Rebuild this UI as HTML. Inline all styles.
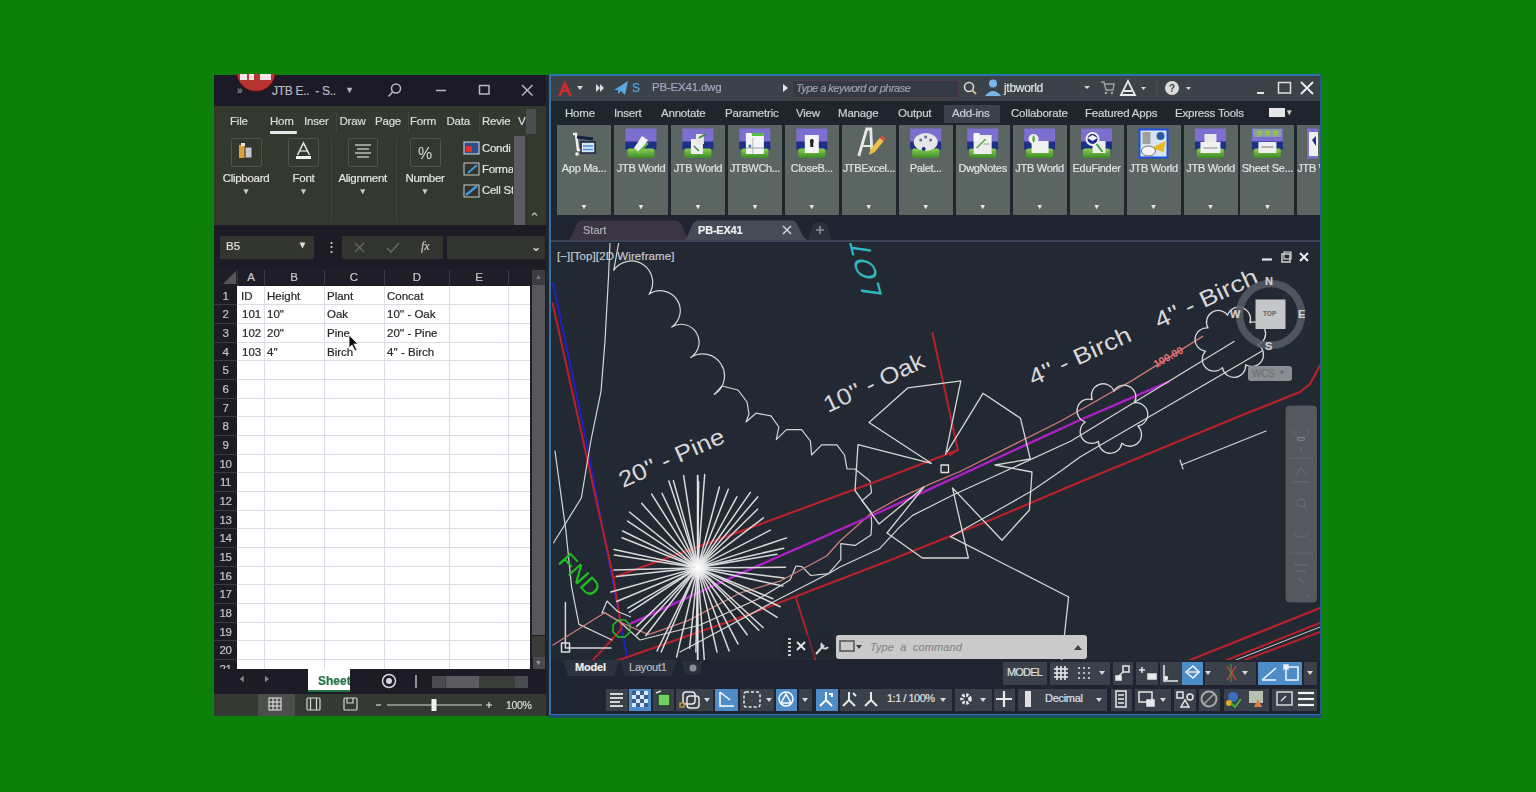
<!DOCTYPE html>
<html><head><meta charset="utf-8">
<style>
*{margin:0;padding:0;box-sizing:border-box}
html,body{width:1536px;height:792px;overflow:hidden;background:#0d7f0b;font-family:"Liberation Sans",sans-serif;position:relative}
.a{position:absolute}
.t{position:absolute;white-space:nowrap;line-height:1;-webkit-text-stroke:0.2px currentColor}
svg{position:absolute;left:0;top:0}
</style></head><body>
<div id="root" style="position:absolute;left:0;top:0;width:1536px;height:792px;filter:blur(0.45px)">
<div class="a" style="left:214px;top:75px;width:334px;height:641px;background:#1c1b26;"></div>
<div class="a" style="left:214px;top:75px;width:334px;height:31px;background:#1c1a27;"></div>
<div class="a" style="left:214px;top:74px;width:100px;height:31px;overflow:hidden"><div class="a" style="left:22px;top:-22px;width:40px;height:40px;border-radius:50%;background:#b8342e;border:1px solid #4a0c10"></div><div class="a" style="left:26px;top:0px;width:14px;height:6px;background:#f2e4e4"></div><div class="a" style="left:33px;top:0px;width:2px;height:6px;background:#c04040"></div><div class="a" style="left:46px;top:0px;width:11px;height:6px;background:#f2e4e4"></div></div>
<div class="t" style="left:237px;top:86px;font-size:10px;color:#9a9aa6;">&#187;</div>
<div class="t" style="left:272px;top:85px;font-size:12px;color:#b8b8c2;letter-spacing:-0.3px">JTB E..&nbsp; - S..</div>
<div class="t" style="left:347px;top:85px;font-size:10px;color:#b8b8c2;">&#9662;</div>
<svg width="1536" height="792" style="pointer-events:none"><g stroke="#b8b8c2" fill="none" stroke-width="1.5"><circle cx="396" cy="88.5" r="4.5"/><line x1="392.8" y1="91.7" x2="388.5" y2="96.5"/><line x1="436" y1="90.5" x2="446" y2="90.5"/><rect x="479.5" y="85.5" width="9.5" height="8.5"/><line x1="522" y1="85" x2="532.5" y2="95.5"/><line x1="532.5" y1="85" x2="522" y2="95.5"/></g></svg>
<div class="a" style="left:214px;top:106px;width:334px;height:119px;background:#33392f;"></div>
<div class="t" style="left:230px;top:116px;font-size:11.5px;color:#dcdcdc;letter-spacing:-0.2px">File</div>
<div class="t" style="left:270px;top:116px;font-size:11.5px;color:#dcdcdc;letter-spacing:-0.2px">Hom</div>
<div class="t" style="left:304px;top:116px;font-size:11.5px;color:#dcdcdc;letter-spacing:-0.2px">Inser</div>
<div class="t" style="left:339.5px;top:116px;font-size:11.5px;color:#dcdcdc;letter-spacing:-0.2px">Draw</div>
<div class="t" style="left:375px;top:116px;font-size:11.5px;color:#dcdcdc;letter-spacing:-0.2px">Page</div>
<div class="t" style="left:410px;top:116px;font-size:11.5px;color:#dcdcdc;letter-spacing:-0.2px">Form</div>
<div class="t" style="left:446.5px;top:116px;font-size:11.5px;color:#dcdcdc;letter-spacing:-0.2px">Data</div>
<div class="t" style="left:482px;top:116px;font-size:11.5px;color:#dcdcdc;letter-spacing:-0.2px">Revie</div>
<div class="t" style="left:518px;top:116px;font-size:11.5px;color:#dcdcdc;letter-spacing:-0.2px">V</div>
<div class="a" style="left:270px;top:131px;width:27px;height:2.5px;background:#e6e6e6;border-radius:1px"></div>
<div class="a" style="left:336px;top:111px;width:1px;height:22px;background:#40443e;"></div>
<div class="a" style="left:407.5px;top:111px;width:1px;height:22px;background:#40443e;"></div>
<div class="a" style="left:478.5px;top:111px;width:1px;height:22px;background:#40443e;"></div>
<div class="a" style="left:526px;top:109px;width:10px;height:25px;background:#4c4f50;"></div>
<div class="a" style="left:230.5px;top:138px;width:31px;height:29px;background:transparent;border:1.5px solid #4f524c;border-radius:2px"></div>
<div class="a" style="left:288px;top:138px;width:31px;height:29px;background:transparent;border:1.5px solid #4f524c;border-radius:2px"></div>
<div class="a" style="left:348px;top:138px;width:29.5px;height:29px;background:transparent;border:1.5px solid #4f524c;border-radius:2px"></div>
<div class="a" style="left:409.5px;top:138px;width:31px;height:29px;background:transparent;border:1.5px solid #4f524c;border-radius:2px"></div>
<div class="t" style="left:206px;top:173px;width:80px;text-align:center;font-size:11.5px;color:#e4e4e4;letter-spacing:-0.3px">Clipboard</div>
<div class="t" style="left:236px;top:188px;width:20px;text-align:center;font-size:8px;color:#cfcfcf">&#9660;</div>
<div class="t" style="left:263.5px;top:173px;width:80px;text-align:center;font-size:11.5px;color:#e4e4e4;letter-spacing:-0.3px">Font</div>
<div class="t" style="left:293.5px;top:188px;width:20px;text-align:center;font-size:8px;color:#cfcfcf">&#9660;</div>
<div class="t" style="left:322.7px;top:173px;width:80px;text-align:center;font-size:11.5px;color:#e4e4e4;letter-spacing:-0.3px">Alignment</div>
<div class="t" style="left:352.7px;top:188px;width:20px;text-align:center;font-size:8px;color:#cfcfcf">&#9660;</div>
<div class="t" style="left:385px;top:173px;width:80px;text-align:center;font-size:11.5px;color:#e4e4e4;letter-spacing:-0.3px">Number</div>
<div class="t" style="left:415px;top:188px;width:20px;text-align:center;font-size:8px;color:#cfcfcf">&#9660;</div>
<div class="a" style="left:330.5px;top:138px;width:1px;height:84px;background:#41453f;"></div>
<div class="a" style="left:396.4px;top:138px;width:1px;height:84px;background:#41453f;"></div>
<svg width="1536" height="792" style="pointer-events:none"><rect x="239" y="145" width="6" height="13" fill="#d9a23a"/><rect x="245" y="147" width="7" height="11" fill="#c7c9cc" stroke="#30332e" stroke-width="1"/><rect x="241" y="143" width="4" height="3" fill="#e8e8e8"/><path d="M297.5 155 L303.5 143 L309.5 155" stroke="#e8e8e8" stroke-width="1.5" fill="none"/><line x1="300" y1="151" x2="307" y2="151" stroke="#e8e8e8" stroke-width="1.2"/><rect x="296" y="156" width="15" height="3" fill="#f2f2f2"/><g stroke="#d0d0d0" stroke-width="1.3"><line x1="355" y1="145" x2="371" y2="145"/><line x1="357" y1="149" x2="369" y2="149"/><line x1="355" y1="153" x2="371" y2="153"/><line x1="357" y1="157" x2="369" y2="157"/></g><text x="425" y="159" font-size="16" fill="#d8d8d8" text-anchor="middle" font-family="Liberation Sans">%</text><rect x="464" y="142" width="15" height="12" fill="#2a4f8a" stroke="#ddd" stroke-width="1"/><rect x="466" y="146" width="6" height="6" fill="#e03030"/><rect x="464" y="163" width="15" height="12" fill="#30332e" stroke="#ccc" stroke-width="1"/><path d="M468 173 L477 165" stroke="#3a9ae0" stroke-width="2"/><rect x="464" y="185" width="15" height="12" fill="#30332e" stroke="#ccc" stroke-width="1"/><path d="M466 195 L477 186" stroke="#3a9ae0" stroke-width="2.5"/></svg>
<div class="t" style="left:482px;top:143px;width:31px;overflow:hidden;font-size:11.5px;color:#e4e4e4;letter-spacing:-0.3px">Condi</div>
<div class="t" style="left:482px;top:164px;width:31px;overflow:hidden;font-size:11.5px;color:#e4e4e4;letter-spacing:-0.3px">Forma</div>
<div class="t" style="left:482px;top:185px;width:31px;overflow:hidden;font-size:11.5px;color:#e4e4e4;letter-spacing:-0.3px">Cell St</div>
<div class="a" style="left:514px;top:136px;width:10.5px;height:89px;background:#5c5b63;"></div>
<div class="t" style="left:529px;top:211px;font-size:13px;color:#c8c8c8;">&#8963;</div>
<div class="a" style="left:214px;top:225px;width:334px;height:43px;background:#1d1c26;"></div>
<div class="a" style="left:219.5px;top:235.5px;width:94px;height:23px;background:#33362f;"></div>
<div class="t" style="left:226px;top:241px;font-size:11.5px;color:#e0e0e0;">B5</div>
<div class="t" style="left:298px;top:241px;font-size:9px;color:#e0e0e0;">&#9660;</div>
<div class="t" style="left:325px;top:240px;font-size:13px;color:#c8c8c8;">&#8942;</div>
<div class="a" style="left:342px;top:235.5px;width:101px;height:23.5px;background:#32352f;"></div>
<svg width="1536" height="792" style="pointer-events:none"><g stroke="#6a6c6a" stroke-width="1.3" fill="none"><line x1="355" y1="243" x2="364" y2="252"/><line x1="364" y1="243" x2="355" y2="252"/><path d="M387 248 L391 252 L399 243"/></g></svg>
<div class="t" style="left:421px;top:240px;font-size:12px;color:#c8c8c8;font-family:Liberation Serif"><i>fx</i></div>
<div class="a" style="left:447px;top:235.5px;width:98px;height:23.5px;background:#32352f;"></div>
<div class="t" style="left:531px;top:241px;font-size:12px;color:#e0e0e0;">&#8964;</div>
<div class="a" style="left:214px;top:268px;width:318px;height:18.5px;background:#1e1d28;"></div>
<svg width="1536" height="792" style="pointer-events:none"><path d="M223 284 L236 284 L236 271 Z" fill="#55585a"/></svg>
<div class="t" style="left:241px;top:272px;width:20px;text-align:center;font-size:11.5px;color:#c8c8cc">A</div>
<div class="t" style="left:284px;top:272px;width:20px;text-align:center;font-size:11.5px;color:#c8c8cc">B</div>
<div class="t" style="left:344px;top:272px;width:20px;text-align:center;font-size:11.5px;color:#c8c8cc">C</div>
<div class="t" style="left:407px;top:272px;width:20px;text-align:center;font-size:11.5px;color:#c8c8cc">D</div>
<div class="t" style="left:469px;top:272px;width:20px;text-align:center;font-size:11.5px;color:#c8c8cc">E</div>
<div class="a" style="left:236.5px;top:270px;width:1px;height:16px;background:#3b3b46;"></div>
<div class="a" style="left:263.9px;top:270px;width:1px;height:16px;background:#3b3b46;"></div>
<div class="a" style="left:323.7px;top:270px;width:1px;height:16px;background:#3b3b46;"></div>
<div class="a" style="left:383.8px;top:270px;width:1px;height:16px;background:#3b3b46;"></div>
<div class="a" style="left:449.0px;top:270px;width:1px;height:16px;background:#3b3b46;"></div>
<div class="a" style="left:508.1px;top:270px;width:1px;height:16px;background:#3b3b46;"></div>
<div class="a" style="left:237px;top:286px;width:293px;height:383px;background:#ffffff;"></div>
<div class="a" style="left:237px;top:304.2px;width:293px;height:1px;background:#d7dee6;"></div>
<div class="a" style="left:237px;top:322.9px;width:293px;height:1px;background:#d7dee6;"></div>
<div class="a" style="left:237px;top:341.5px;width:293px;height:1px;background:#d7dee6;"></div>
<div class="a" style="left:237px;top:360.2px;width:293px;height:1px;background:#d7dee6;"></div>
<div class="a" style="left:237px;top:378.9px;width:293px;height:1px;background:#d7dee6;"></div>
<div class="a" style="left:237px;top:397.6px;width:293px;height:1px;background:#d7dee6;"></div>
<div class="a" style="left:237px;top:416.3px;width:293px;height:1px;background:#d7dee6;"></div>
<div class="a" style="left:237px;top:434.9px;width:293px;height:1px;background:#d7dee6;"></div>
<div class="a" style="left:237px;top:453.6px;width:293px;height:1px;background:#d7dee6;"></div>
<div class="a" style="left:237px;top:472.3px;width:293px;height:1px;background:#d7dee6;"></div>
<div class="a" style="left:237px;top:491.0px;width:293px;height:1px;background:#d7dee6;"></div>
<div class="a" style="left:237px;top:509.7px;width:293px;height:1px;background:#d7dee6;"></div>
<div class="a" style="left:237px;top:528.3px;width:293px;height:1px;background:#d7dee6;"></div>
<div class="a" style="left:237px;top:547.0px;width:293px;height:1px;background:#d7dee6;"></div>
<div class="a" style="left:237px;top:565.7px;width:293px;height:1px;background:#d7dee6;"></div>
<div class="a" style="left:237px;top:584.4px;width:293px;height:1px;background:#d7dee6;"></div>
<div class="a" style="left:237px;top:603.1px;width:293px;height:1px;background:#d7dee6;"></div>
<div class="a" style="left:237px;top:621.7px;width:293px;height:1px;background:#d7dee6;"></div>
<div class="a" style="left:237px;top:640.4px;width:293px;height:1px;background:#d7dee6;"></div>
<div class="a" style="left:237px;top:659.1px;width:293px;height:1px;background:#d7dee6;"></div>
<div class="a" style="left:263.9px;top:286px;width:1px;height:383px;background:#d7dee6;"></div>
<div class="a" style="left:323.7px;top:286px;width:1px;height:383px;background:#d7dee6;"></div>
<div class="a" style="left:383.8px;top:286px;width:1px;height:383px;background:#d7dee6;"></div>
<div class="a" style="left:449.0px;top:286px;width:1px;height:383px;background:#d7dee6;"></div>
<div class="a" style="left:508.1px;top:286px;width:1px;height:383px;background:#d7dee6;"></div>
<div class="t" style="left:214px;top:290.5px;width:23px;text-align:center;font-size:11.5px;color:#c4c4cc;letter-spacing:-0.5px">1</div>
<div class="a" style="left:214px;top:304.2px;width:23px;height:1px;background:#3a3a46;"></div>
<div class="t" style="left:214px;top:309.2px;width:23px;text-align:center;font-size:11.5px;color:#c4c4cc;letter-spacing:-0.5px">2</div>
<div class="a" style="left:214px;top:322.9px;width:23px;height:1px;background:#3a3a46;"></div>
<div class="t" style="left:214px;top:327.9px;width:23px;text-align:center;font-size:11.5px;color:#c4c4cc;letter-spacing:-0.5px">3</div>
<div class="a" style="left:214px;top:341.5px;width:23px;height:1px;background:#3a3a46;"></div>
<div class="t" style="left:214px;top:346.5px;width:23px;text-align:center;font-size:11.5px;color:#c4c4cc;letter-spacing:-0.5px">4</div>
<div class="a" style="left:214px;top:360.2px;width:23px;height:1px;background:#3a3a46;"></div>
<div class="t" style="left:214px;top:365.2px;width:23px;text-align:center;font-size:11.5px;color:#c4c4cc;letter-spacing:-0.5px">5</div>
<div class="a" style="left:214px;top:378.9px;width:23px;height:1px;background:#3a3a46;"></div>
<div class="t" style="left:214px;top:383.9px;width:23px;text-align:center;font-size:11.5px;color:#c4c4cc;letter-spacing:-0.5px">6</div>
<div class="a" style="left:214px;top:397.6px;width:23px;height:1px;background:#3a3a46;"></div>
<div class="t" style="left:214px;top:402.6px;width:23px;text-align:center;font-size:11.5px;color:#c4c4cc;letter-spacing:-0.5px">7</div>
<div class="a" style="left:214px;top:416.3px;width:23px;height:1px;background:#3a3a46;"></div>
<div class="t" style="left:214px;top:421.3px;width:23px;text-align:center;font-size:11.5px;color:#c4c4cc;letter-spacing:-0.5px">8</div>
<div class="a" style="left:214px;top:434.9px;width:23px;height:1px;background:#3a3a46;"></div>
<div class="t" style="left:214px;top:439.9px;width:23px;text-align:center;font-size:11.5px;color:#c4c4cc;letter-spacing:-0.5px">9</div>
<div class="a" style="left:214px;top:453.6px;width:23px;height:1px;background:#3a3a46;"></div>
<div class="t" style="left:214px;top:458.6px;width:23px;text-align:center;font-size:11.5px;color:#c4c4cc;letter-spacing:-0.5px">10</div>
<div class="a" style="left:214px;top:472.3px;width:23px;height:1px;background:#3a3a46;"></div>
<div class="t" style="left:214px;top:477.3px;width:23px;text-align:center;font-size:11.5px;color:#c4c4cc;letter-spacing:-0.5px">11</div>
<div class="a" style="left:214px;top:491.0px;width:23px;height:1px;background:#3a3a46;"></div>
<div class="t" style="left:214px;top:496.0px;width:23px;text-align:center;font-size:11.5px;color:#c4c4cc;letter-spacing:-0.5px">12</div>
<div class="a" style="left:214px;top:509.7px;width:23px;height:1px;background:#3a3a46;"></div>
<div class="t" style="left:214px;top:514.7px;width:23px;text-align:center;font-size:11.5px;color:#c4c4cc;letter-spacing:-0.5px">13</div>
<div class="a" style="left:214px;top:528.3px;width:23px;height:1px;background:#3a3a46;"></div>
<div class="t" style="left:214px;top:533.3px;width:23px;text-align:center;font-size:11.5px;color:#c4c4cc;letter-spacing:-0.5px">14</div>
<div class="a" style="left:214px;top:547.0px;width:23px;height:1px;background:#3a3a46;"></div>
<div class="t" style="left:214px;top:552.0px;width:23px;text-align:center;font-size:11.5px;color:#c4c4cc;letter-spacing:-0.5px">15</div>
<div class="a" style="left:214px;top:565.7px;width:23px;height:1px;background:#3a3a46;"></div>
<div class="t" style="left:214px;top:570.7px;width:23px;text-align:center;font-size:11.5px;color:#c4c4cc;letter-spacing:-0.5px">16</div>
<div class="a" style="left:214px;top:584.4px;width:23px;height:1px;background:#3a3a46;"></div>
<div class="t" style="left:214px;top:589.4px;width:23px;text-align:center;font-size:11.5px;color:#c4c4cc;letter-spacing:-0.5px">17</div>
<div class="a" style="left:214px;top:603.1px;width:23px;height:1px;background:#3a3a46;"></div>
<div class="t" style="left:214px;top:608.1px;width:23px;text-align:center;font-size:11.5px;color:#c4c4cc;letter-spacing:-0.5px">18</div>
<div class="a" style="left:214px;top:621.7px;width:23px;height:1px;background:#3a3a46;"></div>
<div class="t" style="left:214px;top:626.7px;width:23px;text-align:center;font-size:11.5px;color:#c4c4cc;letter-spacing:-0.5px">19</div>
<div class="a" style="left:214px;top:640.4px;width:23px;height:1px;background:#3a3a46;"></div>
<div class="t" style="left:214px;top:645.4px;width:23px;text-align:center;font-size:11.5px;color:#c4c4cc;letter-spacing:-0.5px">20</div>
<div class="a" style="left:214px;top:659.1px;width:23px;height:1px;background:#3a3a46;"></div>
<div class="t" style="left:214px;top:664.1px;width:23px;text-align:center;font-size:11.5px;color:#c4c4cc;letter-spacing:-0.5px">21</div>
<div class="a" style="left:214px;top:677.8px;width:23px;height:1px;background:#3a3a46;"></div>
<div class="t" style="left:241px;top:290.5px;font-size:11.5px;color:#262626">ID</div>
<div class="t" style="left:267px;top:290.5px;font-size:11.5px;color:#262626">Height</div>
<div class="t" style="left:327px;top:290.5px;font-size:11.5px;color:#262626">Plant</div>
<div class="t" style="left:387px;top:290.5px;font-size:11.5px;color:#262626">Concat</div>
<div class="t" style="left:242px;top:309.2px;font-size:11.5px;color:#262626">101</div>
<div class="t" style="left:267px;top:309.2px;font-size:11.5px;color:#262626">10"</div>
<div class="t" style="left:327px;top:309.2px;font-size:11.5px;color:#262626">Oak</div>
<div class="t" style="left:387px;top:309.2px;font-size:11.5px;color:#262626">10'' - Oak</div>
<div class="t" style="left:242px;top:327.9px;font-size:11.5px;color:#262626">102</div>
<div class="t" style="left:267px;top:327.9px;font-size:11.5px;color:#262626">20"</div>
<div class="t" style="left:327px;top:327.9px;font-size:11.5px;color:#262626">Pine</div>
<div class="t" style="left:387px;top:327.9px;font-size:11.5px;color:#262626">20'' - Pine</div>
<div class="t" style="left:242px;top:346.5px;font-size:11.5px;color:#262626">103</div>
<div class="t" style="left:267px;top:346.5px;font-size:11.5px;color:#262626">4''</div>
<div class="t" style="left:327px;top:346.5px;font-size:11.5px;color:#262626">Birch</div>
<div class="t" style="left:387px;top:346.5px;font-size:11.5px;color:#262626">4'' - Birch</div>
<svg width="1536" height="792" style="pointer-events:none"><path d="M349 335 L349 348 L352 345 L355 351 L357 350 L354 344 L358 344 Z" fill="#111" stroke="#fff" stroke-width="0.8"/></svg>
<div class="a" style="left:530px;top:268px;width:18px;height:401px;background:#1e1d28;"></div>
<div class="a" style="left:532px;top:270px;width:13px;height:15px;background:#3c3c44;"></div>
<div class="t" style="left:535px;top:273px;font-size:7px;color:#777;">&#9650;</div>
<div class="a" style="left:531.5px;top:285px;width:13px;height:350px;background:#58585c;"></div>
<div class="a" style="left:531.5px;top:636px;width:13px;height:22px;background:#3a3d37;"></div>
<div class="a" style="left:532.5px;top:657px;width:12.5px;height:11.5px;background:#4a4a50;"></div>
<div class="t" style="left:535px;top:659px;font-size:7px;color:#999;">&#9660;</div>
<div class="a" style="left:214px;top:669px;width:334px;height:24px;background:#1c1b26;"></div>
<div class="t" style="left:239px;top:675px;font-size:8px;color:#8a8a90;transform:scaleX(0.6)">&#9664;</div>
<div class="t" style="left:264px;top:675px;font-size:8px;color:#8a8a90;transform:scaleX(0.6)">&#9654;</div>
<div class="a" style="left:308px;top:669px;width:42px;height:23px;background:#ffffff;"></div>
<div class="t" style="left:318px;top:675px;width:32px;overflow:hidden;font-size:12px;font-weight:bold;color:#217346">Sheet</div>
<div class="a" style="left:308px;top:690px;width:42px;height:2px;background:#217346;"></div>
<svg width="1536" height="792" style="pointer-events:none"><circle cx="389" cy="681" r="6.5" stroke="#d8d8d8" stroke-width="1.5" fill="none"/><circle cx="389" cy="681" r="3" fill="#d8d8d8"/><line x1="416" y1="675" x2="416" y2="688" stroke="#bbb" stroke-width="1.5"/></svg>
<div class="a" style="left:432px;top:675.5px;width:96px;height:12px;background:#3b3e38;"></div>
<div class="a" style="left:432px;top:675.5px;width:13px;height:12px;background:#4a4a52;"></div>
<div class="a" style="left:515px;top:675.5px;width:13px;height:12px;background:#4a4a52;"></div>
<div class="a" style="left:446px;top:675.5px;width:33px;height:12px;background:#5b5b60;"></div>
<div class="a" style="left:214px;top:693.5px;width:334px;height:22.5px;background:#343931;"></div>
<div class="a" style="left:258px;top:693.5px;width:37px;height:22px;background:#4b4e4a;"></div>
<svg width="1536" height="792" style="pointer-events:none"><g stroke="#d8d8d8" stroke-width="1.2" fill="none"><rect x="269" y="698" width="12" height="12"/><line x1="269" y1="702" x2="281" y2="702"/><line x1="269" y1="706" x2="281" y2="706"/><line x1="273" y1="698" x2="273" y2="710"/><line x1="277" y1="698" x2="277" y2="710"/><rect x="307" y="698" width="13" height="12" rx="1"/><line x1="310.5" y1="698" x2="310.5" y2="710"/><line x1="316.5" y1="698" x2="316.5" y2="710"/><rect x="344" y="698" width="13" height="12" rx="1"/><path d="M347 698 L347 703 L353 703 L353 698"/><line x1="376" y1="705" x2="381" y2="705"/><line x1="387" y1="705" x2="482" y2="705"/><line x1="486" y1="705" x2="492" y2="705"/><line x1="489" y1="702" x2="489" y2="708"/></g><rect x="431.5" y="699" width="5" height="12" fill="#f0f0f0"/></svg>
<div class="t" style="left:506px;top:700px;font-size:10.5px;color:#dcdcdc;letter-spacing:-0.3px">100%</div>
<div class="a" style="left:546px;top:75px;width:3px;height:641px;background:#25252d;"></div>
<div class="a" style="left:549px;top:74px;width:773px;height:643.5px;background:#2f73ad;"></div>
<div class="a" style="left:551px;top:76px;width:769px;height:637.5px;background:#1f2430;"></div>
<div class="a" style="left:551px;top:76px;width:769px;height:24.5px;background:#3c4249;"></div>
<svg width="1536" height="792" style="pointer-events:none"><path d="M558 96 L565 80 L572 96 L569 96 L565 87 L561 96 Z" fill="#d02a2a"/><rect x="561" y="90" width="8" height="2" fill="#d02a2a"/><path d="M577 86 L583 86 L580 90 Z" fill="#d8d8d8"/><path d="M596 84 L600 88 L596 92 Z M600 84 L604 88 L600 92 Z" fill="#e0e0e0"/><path d="M614 90 L628 81 L625 95 L621 91 L618 94 L618 90 Z" fill="#5aa8e0"/><path d="M783 84 L788 88 L783 92 Z" fill="#e8e8e8"/><circle cx="969" cy="87" r="4.5" stroke="#d8d8d8" stroke-width="1.6" fill="none"/><line x1="972" y1="90" x2="976" y2="94" stroke="#c8b890" stroke-width="2"/><circle cx="993" cy="83.5" r="4" fill="#78b8e8"/><path d="M985 96 Q993 86 1001 96 Z" fill="#78b8e8"/><path d="M1084 86 L1090 86 L1087 89 Z" fill="#d8d8d8"/><path d="M1101 82 L1104 82 L1106 90 L1113 90 L1114 84 L1105 84" stroke="#9a9ea4" stroke-width="1.5" fill="none"/><circle cx="1106" cy="93" r="1.3" fill="#9a9ea4"/><circle cx="1112" cy="93" r="1.3" fill="#9a9ea4"/><path d="M1121 95 L1128 81 L1135 95 Z M1124 91 L1132 91" stroke="#e8e8e8" stroke-width="1.8" fill="none"/><path d="M1141 87 L1146 87 L1143.5 90 Z" fill="#d8d8d8"/><line x1="1157" y1="80" x2="1157" y2="97" stroke="#4a525c" stroke-width="1"/><circle cx="1172" cy="88" r="7" fill="#dcdcdc"/><text x="1172" y="92" font-size="10" font-weight="bold" text-anchor="middle" fill="#3b424d" font-family="Liberation Sans">?</text><path d="M1186 87 L1191 87 L1188.5 90 Z" fill="#d8d8d8"/><line x1="1257" y1="93" x2="1264" y2="93" stroke="#e8e8e8" stroke-width="2"/><rect x="1278.5" y="82.5" width="12" height="10.5" stroke="#e0e0e0" stroke-width="1.5" fill="none"/><path d="M1301 82 L1313 94 M1313 82 L1301 94" stroke="#f0f0f0" stroke-width="1.8"/></svg>
<div class="t" style="left:632px;top:82px;font-size:12px;color:#5aa8e0;">S</div>
<div class="t" style="left:652px;top:82px;font-size:11.5px;color:#a0a8c0;letter-spacing:-0.2px">PB-EX41.dwg</div>
<div class="a" style="left:792px;top:79.5px;width:167px;height:18px;background:#333a44;border:1px solid #4b3f48"></div>
<div class="t" style="left:796px;top:83px;font-size:11px;color:#9aa0a8;letter-spacing:-0.5px"><i>Type a keyword or phrase</i></div>
<div class="t" style="left:1004px;top:82px;font-size:12px;color:#dde0e4;letter-spacing:-0.3px">jtbworld</div>
<div class="a" style="left:551px;top:100.5px;width:769px;height:22.5px;background:#1f252d;"></div>
<div class="a" style="left:944px;top:104.5px;width:56px;height:18.5px;background:#3b424d;"></div>
<div class="t" style="left:565px;top:108px;font-size:11.5px;color:#cdd1d6;letter-spacing:-0.2px">Home</div>
<div class="t" style="left:614px;top:108px;font-size:11.5px;color:#cdd1d6;letter-spacing:-0.2px">Insert</div>
<div class="t" style="left:661px;top:108px;font-size:11.5px;color:#cdd1d6;letter-spacing:-0.2px">Annotate</div>
<div class="t" style="left:725px;top:108px;font-size:11.5px;color:#cdd1d6;letter-spacing:-0.2px">Parametric</div>
<div class="t" style="left:796px;top:108px;font-size:11.5px;color:#cdd1d6;letter-spacing:-0.2px">View</div>
<div class="t" style="left:838px;top:108px;font-size:11.5px;color:#cdd1d6;letter-spacing:-0.2px">Manage</div>
<div class="t" style="left:898px;top:108px;font-size:11.5px;color:#cdd1d6;letter-spacing:-0.2px">Output</div>
<div class="t" style="left:952px;top:108px;font-size:11.5px;color:#cdd1d6;letter-spacing:-0.2px">Add-ins</div>
<div class="t" style="left:1011px;top:108px;font-size:11.5px;color:#cdd1d6;letter-spacing:-0.2px">Collaborate</div>
<div class="t" style="left:1085px;top:108px;font-size:11.5px;color:#cdd1d6;letter-spacing:-0.2px">Featured Apps</div>
<div class="t" style="left:1175px;top:108px;font-size:11.5px;color:#cdd1d6;letter-spacing:-0.2px">Express Tools</div>
<div class="a" style="left:1269px;top:108px;width:16px;height:9px;background:#e6e6e6;"></div>
<div class="t" style="left:1287px;top:108px;font-size:9px;color:#d0d0d0;">&#9662;</div>
<div class="a" style="left:551px;top:123px;width:769px;height:92px;background:#1f252d;"></div>
<div class="a" style="left:557.0px;top:124.5px;width:54px;height:90px;background:#5b6663;"></div>
<div class="t" style="left:555.0px;top:163px;width:58px;text-align:center;font-size:11px;color:#e0e4e8;letter-spacing:-0.3px;overflow:hidden">App Ma...</div>
<div class="t" style="left:579.0px;top:203px;width:10px;text-align:center;font-size:7px;color:#e8eaf0">&#9660;</div>
<div class="a" style="left:614.0px;top:124.5px;width:54px;height:90px;background:#5b6663;"></div>
<div class="t" style="left:612.0px;top:163px;width:58px;text-align:center;font-size:11px;color:#e0e4e8;letter-spacing:-0.3px;overflow:hidden">JTB World</div>
<div class="t" style="left:636.0px;top:203px;width:10px;text-align:center;font-size:7px;color:#e8eaf0">&#9660;</div>
<div class="a" style="left:670.9px;top:124.5px;width:54px;height:90px;background:#5b6663;"></div>
<div class="t" style="left:668.9px;top:163px;width:58px;text-align:center;font-size:11px;color:#e0e4e8;letter-spacing:-0.3px;overflow:hidden">JTB World</div>
<div class="t" style="left:692.9px;top:203px;width:10px;text-align:center;font-size:7px;color:#e8eaf0">&#9660;</div>
<div class="a" style="left:727.9px;top:124.5px;width:54px;height:90px;background:#5b6663;"></div>
<div class="t" style="left:725.9px;top:163px;width:58px;text-align:center;font-size:11px;color:#e0e4e8;letter-spacing:-0.3px;overflow:hidden">JTBWCh...</div>
<div class="t" style="left:749.9px;top:203px;width:10px;text-align:center;font-size:7px;color:#e8eaf0">&#9660;</div>
<div class="a" style="left:784.8px;top:124.5px;width:54px;height:90px;background:#5b6663;"></div>
<div class="t" style="left:782.8px;top:163px;width:58px;text-align:center;font-size:11px;color:#e0e4e8;letter-spacing:-0.3px;overflow:hidden">CloseB...</div>
<div class="t" style="left:806.8px;top:203px;width:10px;text-align:center;font-size:7px;color:#e8eaf0">&#9660;</div>
<div class="a" style="left:841.8px;top:124.5px;width:54px;height:90px;background:#5b6663;"></div>
<div class="t" style="left:839.8px;top:163px;width:58px;text-align:center;font-size:11px;color:#e0e4e8;letter-spacing:-0.3px;overflow:hidden">JTBExcel...</div>
<div class="t" style="left:863.8px;top:203px;width:10px;text-align:center;font-size:7px;color:#e8eaf0">&#9660;</div>
<div class="a" style="left:898.7px;top:124.5px;width:54px;height:90px;background:#5b6663;"></div>
<div class="t" style="left:896.7px;top:163px;width:58px;text-align:center;font-size:11px;color:#e0e4e8;letter-spacing:-0.3px;overflow:hidden">Palet...</div>
<div class="t" style="left:920.7px;top:203px;width:10px;text-align:center;font-size:7px;color:#e8eaf0">&#9660;</div>
<div class="a" style="left:955.7px;top:124.5px;width:54px;height:90px;background:#5b6663;"></div>
<div class="t" style="left:953.7px;top:163px;width:58px;text-align:center;font-size:11px;color:#e0e4e8;letter-spacing:-0.3px;overflow:hidden">DwgNotes</div>
<div class="t" style="left:977.7px;top:203px;width:10px;text-align:center;font-size:7px;color:#e8eaf0">&#9660;</div>
<div class="a" style="left:1012.6px;top:124.5px;width:54px;height:90px;background:#5b6663;"></div>
<div class="t" style="left:1010.6px;top:163px;width:58px;text-align:center;font-size:11px;color:#e0e4e8;letter-spacing:-0.3px;overflow:hidden">JTB World</div>
<div class="t" style="left:1034.6px;top:203px;width:10px;text-align:center;font-size:7px;color:#e8eaf0">&#9660;</div>
<div class="a" style="left:1069.6px;top:124.5px;width:54px;height:90px;background:#5b6663;"></div>
<div class="t" style="left:1067.6px;top:163px;width:58px;text-align:center;font-size:11px;color:#e0e4e8;letter-spacing:-0.3px;overflow:hidden">EduFinder</div>
<div class="t" style="left:1091.6px;top:203px;width:10px;text-align:center;font-size:7px;color:#e8eaf0">&#9660;</div>
<div class="a" style="left:1126.5px;top:124.5px;width:54px;height:90px;background:#5b6663;"></div>
<div class="t" style="left:1124.5px;top:163px;width:58px;text-align:center;font-size:11px;color:#e0e4e8;letter-spacing:-0.3px;overflow:hidden">JTB World</div>
<div class="t" style="left:1148.5px;top:203px;width:10px;text-align:center;font-size:7px;color:#e8eaf0">&#9660;</div>
<div class="a" style="left:1183.5px;top:124.5px;width:54px;height:90px;background:#5b6663;"></div>
<div class="t" style="left:1181.5px;top:163px;width:58px;text-align:center;font-size:11px;color:#e0e4e8;letter-spacing:-0.3px;overflow:hidden">JTB World</div>
<div class="t" style="left:1205.5px;top:203px;width:10px;text-align:center;font-size:7px;color:#e8eaf0">&#9660;</div>
<div class="a" style="left:1240.4px;top:124.5px;width:54px;height:90px;background:#5b6663;"></div>
<div class="t" style="left:1238.4px;top:163px;width:58px;text-align:center;font-size:11px;color:#e0e4e8;letter-spacing:-0.3px;overflow:hidden">Sheet Se...</div>
<div class="t" style="left:1262.4px;top:203px;width:10px;text-align:center;font-size:7px;color:#e8eaf0">&#9660;</div>
<div class="a" style="left:1297.3px;top:124.5px;width:22.7px;height:90px;background:#5b6663;"></div>
<div class="t" style="left:1297.3px;top:163px;width:22.7px;font-size:11px;color:#e0e4e8;letter-spacing:-0.3px;overflow:hidden">JTB W</div>
<div class="a" style="left:551px;top:215px;width:769px;height:26px;background:#1f2430;"></div>
<svg width="1536" height="792" style="pointer-events:none"><path d="M568 240 C574 238 574 221 582 220.5 L676 220.5 C684 221 684 238 692 240 Z" fill="#3a3540"/><path d="M684 240 C690 238 690 221 698 220.5 L792 220.5 C800 221 800 238 808 240 Z" fill="#464c55"/><path d="M807 240 C811 238 811 223 816 222.5 L824 222.5 C829 223 829 238 833 240 Z" fill="#2c323c"/><path d="M783 226 L791 234 M791 226 L783 234" stroke="#d8d8d8" stroke-width="1.4"/><path d="M816 230 L824 230 M820 226 L820 234" stroke="#8a9099" stroke-width="1.5"/></svg>
<div class="t" style="left:583px;top:225px;font-size:11px;color:#aab0b8;">Start</div>
<div class="t" style="left:698px;top:225px;font-size:11px;color:#f0f0f0;font-weight:bold;letter-spacing:-0.2px">PB-EX41</div>
<div class="a" style="left:551px;top:239.5px;width:769px;height:2.5px;background:#3a4656;"></div>
<div class="a" style="left:551px;top:242.5px;width:769px;height:418px;background:#222932;"></div>
<div class="t" style="left:557px;top:251px;font-size:11.5px;color:#c8cbd0;letter-spacing:0.1px">[&#8722;][Top][2D Wireframe]</div>
<svg width="1536" height="792" style="pointer-events:none"><defs><linearGradient id="gg" x1="0" y1="0" x2="0" y2="1"><stop offset="0" stop-color="#8ad050"/><stop offset="1" stop-color="#3c8a28"/></linearGradient></defs><path d="M573.0 134 L576.0 134 L578.0 150 L592.0 150" stroke="#f0f0f0" stroke-width="2.5" fill="none"/><path d="M577.0 137 L593.0 139" stroke="#1a2040" stroke-width="3"/><rect x="581.0" y="142" width="14" height="11" fill="#d8e6f4" stroke="#1a2040" stroke-width="1.5"/><line x1="583.0" y1="146" x2="593.0" y2="146" stroke="#4a90d8" stroke-width="1.5"/><line x1="583.0" y1="149.5" x2="593.0" y2="149.5" stroke="#4a90d8" stroke-width="1.5"/><circle cx="577.0" cy="154" r="1.8" fill="#f0f0f0"/><rect x="625.45" y="128.5" width="31" height="14" fill="#7c6fcf"/><rect x="625.45" y="141.5" width="31" height="8" fill="#1e2f86"/><rect x="627.45" y="148.5" width="27" height="9.5" fill="url(#gg)" rx="2"/><path d="M633.95 148 L641.95 136 L647.95 140 L639.95 153 Z" fill="#f0f0f0"/><path d="M638.95 152 L647.95 143" stroke="#60c040" stroke-width="2"/><rect x="682.4" y="128.5" width="31" height="14" fill="#7c6fcf"/><rect x="682.4" y="141.5" width="31" height="8" fill="#1e2f86"/><rect x="684.4" y="148.5" width="27" height="9.5" fill="url(#gg)" rx="2"/><rect x="690.9" y="139" width="12" height="15" fill="#f0f0f0"/><rect x="695.9" y="134" width="8" height="10" fill="#e8e8e8"/><path d="M693.9 146 L698.9 151" stroke="#3a8a40" stroke-width="1.5"/><path d="M698.9 138 L705.9 134" stroke="#3a9040" stroke-width="2"/><rect x="739.35" y="128.5" width="31" height="14" fill="#7c6fcf"/><rect x="739.35" y="141.5" width="31" height="8" fill="#1e2f86"/><rect x="741.35" y="148.5" width="27" height="9.5" fill="url(#gg)" rx="2"/><rect x="745.85" y="133" width="18" height="21" fill="#f4f4f4"/><rect x="751.85" y="133" width="12" height="3" fill="#50c040"/><line x1="745.85" y1="148" x2="763.85" y2="148" stroke="#888" stroke-width="0.8"/><line x1="752.85" y1="138" x2="752.85" y2="154" stroke="#aaa" stroke-width="0.8"/><circle cx="749.85" cy="146" r="1.5" fill="#4a70c0"/><rect x="796.3" y="128.5" width="31" height="14" fill="#7c6fcf"/><rect x="796.3" y="141.5" width="31" height="8" fill="#1e2f86"/><rect x="798.3" y="148.5" width="27" height="9.5" fill="url(#gg)" rx="2"/><rect x="804.8" y="135" width="14" height="18" fill="#f4f4f4"/><rect x="810.3" y="141" width="3" height="6" fill="#222"/><circle cx="811.8" cy="141" r="2" fill="#222"/><path d="M858.75 156 L866.75 129 L870.75 129 L871.75 150" stroke="#e8e8e8" stroke-width="2.8" fill="none"/><path d="M862.75 146 L871.75 146" stroke="#e8e8e8" stroke-width="2"/><path d="M868.75 155 L870.75 149 L879.75 138 L883.75 141 L874.75 152 Z" fill="#f0c048"/><path d="M879.75 138 L881.75 135.5 L885.75 138.5 L883.75 141 Z" fill="#e04848"/><rect x="910.2" y="128.5" width="31" height="14" fill="#7c6fcf"/><rect x="910.2" y="141.5" width="31" height="8" fill="#1e2f86"/><rect x="912.2" y="148.5" width="27" height="9.5" fill="url(#gg)" rx="2"/><ellipse cx="925.7" cy="142" rx="12" ry="9" fill="#e6e6e6"/><circle cx="920.7" cy="140" r="1.5" fill="#6a6a9a"/><circle cx="925.7" cy="137" r="1.5" fill="#6a6a9a"/><circle cx="930.7" cy="140" r="1.5" fill="#6a6a9a"/><circle cx="923.7" cy="149" r="2" fill="#1e2f86"/><rect x="967.1500000000001" y="128.5" width="31" height="14" fill="#7c6fcf"/><rect x="967.1500000000001" y="141.5" width="31" height="8" fill="#1e2f86"/><rect x="969.1500000000001" y="148.5" width="27" height="9.5" fill="url(#gg)" rx="2"/><rect x="973.6500000000001" y="135" width="18" height="19" fill="#eeeeee"/><rect x="973.6500000000001" y="133" width="6" height="8" fill="#f8f8f8"/><path d="M976.6500000000001 148 L985.6500000000001 139" stroke="#50b040" stroke-width="1.5"/><line x1="983.6500000000001" y1="144" x2="989.6500000000001" y2="144" stroke="#999"/><rect x="1024.1" y="128.5" width="31" height="14" fill="#7c6fcf"/><rect x="1024.1" y="141.5" width="31" height="8" fill="#1e2f86"/><rect x="1026.1" y="148.5" width="27" height="9.5" fill="url(#gg)" rx="2"/><rect x="1031.6" y="141" width="17" height="12" fill="#f0f0f0"/><circle cx="1033.6" cy="139" r="5" fill="#f0f0f0"/><path d="M1033.6 135 Q1036.6 139 1033.6 143 Q1030.6 139 1033.6 135" fill="#60b040"/><rect x="1081.0500000000002" y="128.5" width="31" height="14" fill="#7c6fcf"/><rect x="1081.0500000000002" y="141.5" width="31" height="8" fill="#1e2f86"/><rect x="1083.0500000000002" y="148.5" width="27" height="9.5" fill="url(#gg)" rx="2"/><rect x="1092.5500000000002" y="141" width="13" height="12" fill="#eeeeee"/><circle cx="1092.5500000000002" cy="139" r="6" fill="#1e2f86" stroke="#f0f0f0" stroke-width="2"/><path d="M1087.5500000000002 138 L1092.5500000000002 135 L1097.5500000000002 138 L1092.5500000000002 141 Z" fill="#f0f0f0"/><line x1="1096.5500000000002" y1="144" x2="1102.5500000000002" y2="152" stroke="#40a040" stroke-width="2"/><rect x="1138.5" y="128.5" width="30" height="30" fill="#1a50e0"/><rect x="1140.5" y="130.5" width="26" height="26" fill="#d8e4f0"/><rect x="1142.5" y="132" width="8" height="12" fill="#a0a0a0"/><path d="M1151.5 148 L1165.5 141 L1163.5 152 Z" fill="#e8b820"/><ellipse cx="1148.5" cy="151" rx="7" ry="5" fill="#f4f4f4" stroke="#555" stroke-width="0.8"/><circle cx="1160.5" cy="136" r="4" fill="#2a5aa0"/><rect x="1194.95" y="128.5" width="31" height="14" fill="#7c6fcf"/><rect x="1194.95" y="141.5" width="31" height="8" fill="#1e2f86"/><rect x="1196.95" y="148.5" width="27" height="9.5" fill="url(#gg)" rx="2"/><rect x="1200.45" y="142" width="20" height="11" fill="#f0f0f0"/><rect x="1204.45" y="134" width="12" height="8" fill="#e8e8e8"/><line x1="1203.45" y1="148" x2="1217.45" y2="148" stroke="#888"/><rect x="1251.9" y="128.5" width="31" height="14" fill="#7c6fcf"/><rect x="1251.9" y="141.5" width="31" height="8" fill="#1e2f86"/><rect x="1253.9" y="148.5" width="27" height="9.5" fill="url(#gg)" rx="2"/><rect x="1253.4" y="129" width="28" height="8" fill="#8aa0a8"/><circle cx="1259.4" cy="133" r="2.5" fill="#a0c040"/><circle cx="1267.4" cy="133" r="2.5" fill="#a0c040"/><circle cx="1275.4" cy="133" r="2.5" fill="#a0c040"/><rect x="1258.4" y="142" width="18" height="11" fill="#eeeeee"/><line x1="1261.4" y1="147" x2="1273.4" y2="147" stroke="#777"/><rect x="1307" y="128.5" width="11" height="30" fill="#7c6fcf"/><rect x="1309" y="132" width="9" height="24" fill="#f0f0f0"/><path d="M1312 140 L1316 136 L1316 146 Z" fill="#1e2f86"/></svg>
<div class="a" style="left:1320px;top:74px;width:2px;height:643.5px;background:#225d8c;"></div>
<svg width="1536" height="792" style="pointer-events:none"><defs><clipPath id="dc"><rect x="551" y="243" width="769" height="417"/></clipPath></defs><g clip-path="url(#dc)" fill="none" stroke-linejoin="round" stroke-linecap="round"><polyline points="553,283 586,440 627,657" stroke="#2020c0" stroke-width="2" /><polyline points="552.5,303 583,440 613.3,577.5 621.6,629 593,660" stroke="#b8202a" stroke-width="2" /><polyline points="610,243 608.6,275 605,341 601,391.5 591,440 581.3,498 553.6,542.8" stroke="#d6d6d6" stroke-width="1.2" /><polyline points="555,451 566,531.7 571.6,587 579,624.4 612,640" stroke="#d6d6d6" stroke-width="1.2" /><path d="M618.7,243 L613.7,270.3 A21.3,21.3 0 0 1 649,294.3 A19.9,19.9 0 0 1 671.7,327 A17.9,17.9 0 0 1 690.7,357.4 A21.9,21.9 0 0 1 714.4,394.3 " stroke="#d6d6d6" stroke-width="1.2"/><polyline points="714.4,394.3 722,386 738,390 747,402 749,414 746,422 756,413.2 771,415.8 778.8,427 776.3,439.7 786.4,429.6 801.5,429.6 810.4,441 811.6,455 821.7,444.8 836.9,444.8 844.5,455 847,468.8 855,469 870,481 871.6,492.5 862,500.8 871,512 871.7,524 871,535 855,545.4 840.8,543.7 840.8,559.6 828.4,573.7 810.7,575.5 802,566.6 796,566 790,580 760,598 700,625 640,640 620,622 604.7,612.8 602,613 607,601 617.6,611.5 630.5,616.7" stroke="#d6d6d6" stroke-width="1.2" /><polyline points="565.4,602.5 565.4,648 611,648" stroke="#d6d6d6" stroke-width="1.5" /><rect x="561.5" y="643" width="8" height="9" stroke="#e0e0e0" stroke-width="1.5"/><polygon points="618,620 625,620 630,625 630,632 625,637 618,637 613,632 613,625" stroke="#20c020" stroke-width="1.5"/><polyline points="553,645 604.7,612.8 620,622 648.5,634.7 688,620.6 740,593 780.7,580.8 826.6,556 840,541 870.3,514 900.6,497.3 931,483.6 960,471.5 1060,421.5 1132,380.6 1202.6,336.4" stroke="#d07a7a" stroke-width="1.3" /><polyline points="595,668 628.5,656.7 748,614.7 890.6,560 990.5,520 1080,481.9 1240,416 1300,392 1310,384 1322,362" stroke="#b8202a" stroke-width="2.2" /><polyline points="613.3,577.5 748,528.6 880,480 957.8,450" stroke="#b8202a" stroke-width="2.2" /><polyline points="932.5,333 957.8,450 950,455" stroke="#b8202a" stroke-width="2" /><polyline points="796,597.8 815.5,660" stroke="#b8202a" stroke-width="1.8" /><polyline points="631,623.3 740,573.7 880,512 1080,420 1168.5,381.9" stroke="#b020c8" stroke-width="2.4" /><polyline points="680,652 777,600 828.4,573.7 840,567 879.4,548.8 900,526.7 912.6,515.4 953,495 986,480 1071,441 1234,341.5" stroke="#d6d6d6" stroke-width="1.2" /><polyline points="950.5,536.8 1000,509 1032,490.7 1060.4,471.3 1080,457 1240,364 1262,351" stroke="#d6d6d6" stroke-width="1.2" /><polyline points="1181.7,464.7 1266,431" stroke="#d6d6d6" stroke-width="1.2" /><polyline points="1180,460 1183,469" stroke="#d6d6d6" stroke-width="1.2" /><polyline points="945.6,454.4 960.8,380.8 908,387.8 869,422.5 931.3,463.3 858,444.7 855,490.5 879,524 924,487 887,533 922.4,558 968.4,558 952.5,488 1002,540.2 1029.4,510 1032,472 995,465 1030.3,459 1020.5,418.3 983,393.3 947.2,451.8" stroke="#d6d6d6" stroke-width="1.3" /><polyline points="950.7,536.7 1068.6,597 1061.7,660" stroke="#d6d6d6" stroke-width="1.3" /><rect x="941" y="465" width="7.5" height="7.5" stroke="#e0e0e0" stroke-width="1.3"/><path d="M1137.8,426.0 A11.7,11.7 0 0 1 1121.8,443.1 A11.7,11.7 0 0 1 1098.5,441.4 A11.7,11.7 0 0 1 1085.3,422.0 A11.7,11.7 0 0 1 1092.2,399.6 A11.7,11.7 0 0 1 1114.0,391.1 A11.7,11.7 0 0 1 1134.3,402.8 A11.7,11.7 0 0 1 1137.8,426.0 Z" stroke="#d6d6d6" stroke-width="1.3"/><path d="M1257.9,344.7 A11.7,11.7 0 0 1 1245.6,364.7 A11.7,11.7 0 0 1 1222.4,367.6 A11.7,11.7 0 0 1 1205.6,351.2 A11.7,11.7 0 0 1 1208.0,327.9 A11.7,11.7 0 0 1 1227.6,315.2 A11.7,11.7 0 0 1 1249.9,322.7 A11.7,11.7 0 0 1 1257.9,344.7 Z" stroke="#d6d6d6" stroke-width="1.3"/><polyline points="1190,660 1320,608" stroke="#b8202a" stroke-width="2.2" /><polyline points="1227,660 1320,623" stroke="#b8202a" stroke-width="2" /><polyline points="1245,660 1320,632" stroke="#b8202a" stroke-width="2" /><polyline points="1236,660 1320,627" stroke="#c8c8c8" stroke-width="1" /><defs><radialGradient id="glow"><stop offset="0" stop-color="#ffffff" stop-opacity="1"/><stop offset="0.4" stop-color="#ffffff" stop-opacity="0.6"/><stop offset="1" stop-color="#ffffff" stop-opacity="0"/></radialGradient></defs><line x1="703.2" y1="567.7" x2="785.5" y2="567.3" stroke="#dadada" stroke-width="1.5"/><line x1="701.2" y1="568.1" x2="784.2" y2="577.9" stroke="#dadada" stroke-width="1.5"/><line x1="701.4" y1="568.5" x2="782.9" y2="585.9" stroke="#dadada" stroke-width="1.5"/><line x1="699.4" y1="568.4" x2="772.9" y2="598.8" stroke="#dadada" stroke-width="1.5"/><line x1="701.5" y1="569.5" x2="780.2" y2="606.8" stroke="#dadada" stroke-width="1.5"/><line x1="702.6" y1="570.8" x2="777.2" y2="617.4" stroke="#dadada" stroke-width="1.5"/><line x1="698.4" y1="568.3" x2="763.1" y2="627.5" stroke="#dadada" stroke-width="1.5"/><line x1="697.9" y1="568.0" x2="758.8" y2="630.2" stroke="#dadada" stroke-width="1.5"/><line x1="697.8" y1="567.8" x2="747.2" y2="634.8" stroke="#dadada" stroke-width="1.5"/><line x1="700.1" y1="572.2" x2="738.0" y2="643.9" stroke="#dadada" stroke-width="1.5"/><line x1="698.8" y1="570.5" x2="729.1" y2="650.9" stroke="#dadada" stroke-width="1.5"/><line x1="698.1" y1="569.3" x2="717.0" y2="651.9" stroke="#dadada" stroke-width="1.5"/><line x1="698.1" y1="572.7" x2="704.4" y2="661.4" stroke="#dadada" stroke-width="1.5"/><line x1="697.7" y1="569.1" x2="695.9" y2="652.1" stroke="#dadada" stroke-width="1.5"/><line x1="697.2" y1="572.3" x2="689.6" y2="648.3" stroke="#dadada" stroke-width="1.5"/><line x1="697.2" y1="570.0" x2="676.6" y2="657.1" stroke="#dadada" stroke-width="1.5"/><line x1="697.7" y1="567.7" x2="661.2" y2="652.0" stroke="#dadada" stroke-width="1.5"/><line x1="696.5" y1="570.2" x2="657.0" y2="651.0" stroke="#dadada" stroke-width="1.5"/><line x1="697.4" y1="568.0" x2="645.8" y2="635.7" stroke="#dadada" stroke-width="1.5"/><line x1="696.6" y1="568.9" x2="636.5" y2="635.0" stroke="#dadada" stroke-width="1.5"/><line x1="693.5" y1="571.7" x2="636.7" y2="626.4" stroke="#dadada" stroke-width="1.5"/><line x1="696.5" y1="568.5" x2="629.3" y2="612.3" stroke="#dadada" stroke-width="1.5"/><line x1="693.6" y1="570.1" x2="627.7" y2="608.1" stroke="#dadada" stroke-width="1.5"/><line x1="695.2" y1="568.7" x2="616.6" y2="601.5" stroke="#dadada" stroke-width="1.5"/><line x1="696.9" y1="567.9" x2="610.8" y2="592.0" stroke="#dadada" stroke-width="1.5"/><line x1="695.2" y1="568.0" x2="616.5" y2="576.4" stroke="#dadada" stroke-width="1.5"/><line x1="691.9" y1="567.9" x2="614.0" y2="570.1" stroke="#dadada" stroke-width="1.5"/><line x1="692.5" y1="566.9" x2="614.4" y2="555.0" stroke="#dadada" stroke-width="1.5"/><line x1="692.7" y1="566.6" x2="614.1" y2="549.6" stroke="#dadada" stroke-width="1.5"/><line x1="692.2" y1="565.5" x2="622.0" y2="537.8" stroke="#dadada" stroke-width="1.5"/><line x1="693.5" y1="565.7" x2="622.6" y2="531.0" stroke="#dadada" stroke-width="1.5"/><line x1="697.3" y1="567.5" x2="627.6" y2="521.1" stroke="#dadada" stroke-width="1.5"/><line x1="696.6" y1="566.8" x2="629.4" y2="512.0" stroke="#dadada" stroke-width="1.5"/><line x1="695.9" y1="565.6" x2="641.8" y2="503.4" stroke="#dadada" stroke-width="1.5"/><line x1="695.9" y1="564.8" x2="651.7" y2="494.1" stroke="#dadada" stroke-width="1.5"/><line x1="697.3" y1="566.9" x2="662.0" y2="493.2" stroke="#dadada" stroke-width="1.5"/><line x1="697.2" y1="566.3" x2="668.8" y2="480.9" stroke="#dadada" stroke-width="1.5"/><line x1="696.2" y1="562.3" x2="673.4" y2="480.7" stroke="#dadada" stroke-width="1.5"/><line x1="696.9" y1="562.5" x2="683.6" y2="475.5" stroke="#dadada" stroke-width="1.5"/><line x1="697.7" y1="567.1" x2="698.6" y2="481.8" stroke="#dadada" stroke-width="1.5"/><line x1="697.8" y1="566.3" x2="704.7" y2="474.5" stroke="#dadada" stroke-width="1.5"/><line x1="699.0" y1="562.9" x2="719.4" y2="487.0" stroke="#dadada" stroke-width="1.5"/><line x1="698.1" y1="566.7" x2="728.3" y2="489.3" stroke="#dadada" stroke-width="1.5"/><line x1="698.4" y1="566.5" x2="736.9" y2="496.9" stroke="#dadada" stroke-width="1.5"/><line x1="699.8" y1="564.7" x2="750.4" y2="492.4" stroke="#dadada" stroke-width="1.5"/><line x1="698.5" y1="566.8" x2="757.7" y2="496.9" stroke="#dadada" stroke-width="1.5"/><line x1="699.6" y1="565.8" x2="757.6" y2="509.2" stroke="#dadada" stroke-width="1.5"/><line x1="699.5" y1="566.4" x2="763.4" y2="517.9" stroke="#dadada" stroke-width="1.5"/><line x1="699.6" y1="566.7" x2="770.4" y2="530.2" stroke="#dadada" stroke-width="1.5"/><line x1="701.4" y1="566.4" x2="786.6" y2="537.9" stroke="#dadada" stroke-width="1.5"/><line x1="698.5" y1="567.5" x2="783.7" y2="548.2" stroke="#dadada" stroke-width="1.5"/><line x1="703.1" y1="566.8" x2="776.8" y2="554.3" stroke="#dadada" stroke-width="1.5"/><line x1="697.7" y1="475.70000000000005" x2="697.7" y2="659.7" stroke="#e4e4e4" stroke-width="1.8"/><circle cx="697.7" cy="567.7" r="14" fill="url(#glow)" stroke="none"/><text x="623" y="488" font-size="23" fill="#d8d8d8" stroke="none" font-family="Liberation Sans" textLength="113" lengthAdjust="spacingAndGlyphs" transform="rotate(-24 623 488)">20'' - Pine</text><text x="828" y="413" font-size="23" fill="#d8d8d8" stroke="none" font-family="Liberation Sans" textLength="109" lengthAdjust="spacingAndGlyphs" transform="rotate(-25.3 828 413)">10'' - Oak</text><text x="1033" y="386" font-size="23" fill="#d8d8d8" stroke="none" font-family="Liberation Sans" textLength="110" lengthAdjust="spacingAndGlyphs" transform="rotate(-24.5 1033 386)">4'' - Birch</text><text x="1159" y="329" font-size="23" fill="#d8d8d8" stroke="none" font-family="Liberation Sans" textLength="111" lengthAdjust="spacingAndGlyphs" transform="rotate(-25 1159 329)">4'' - Birch</text><text x="0" y="0" font-size="28" fill="#30b8c0" stroke="none" font-family="Liberation Sans" letter-spacing="1" transform="translate(882.5 297) rotate(-104) skewX(-22)">LOT</text><text x="557" y="562" font-size="24" fill="#20c020" stroke="none" font-family="Liberation Sans" transform="rotate(48 557 562)" >FND</text><text x="1156" y="368" font-size="10.5" fill="#e87070" stroke="none" font-family="Liberation Sans" transform="rotate(-29 1156 368)" font-weight="bold">100.00</text></g></svg>
<svg width="1536" height="792" style="pointer-events:none"><line x1="1262" y1="259.5" x2="1272" y2="259.5" stroke="#e8e8e8" stroke-width="2.2"/><rect x="1282" y="254" width="8" height="8" stroke="#d0d0d0" stroke-width="1.5" fill="none"/><rect x="1284" y="252" width="7" height="7" stroke="#d0d0d0" stroke-width="1.2" fill="none"/><path d="M1300 253 L1308 261 M1308 253 L1300 261" stroke="#f0f0f0" stroke-width="2"/><circle cx="1270.5" cy="314.5" r="31" stroke="#575d65" stroke-width="7.5" fill="none" opacity="0.85"/><rect x="1255.5" y="299.5" width="30" height="29.5" fill="#c4c6c8"/><rect x="1248" y="366" width="44" height="15" rx="3" fill="#8a8d92"/><rect x="1285" y="405" width="32.5" height="198" rx="4" fill="#55585f" stroke="#1c2028" stroke-width="1"/><g stroke="#6a6e76" stroke-width="1" fill="none"><path d="M1293 430 A8 8 0 0 0 1309 430"/><ellipse cx="1301" cy="439" rx="4" ry="1.5" stroke="#80848c"/><line x1="1301" y1="447" x2="1301" y2="452"/><line x1="1289" y1="458" x2="1313" y2="458" stroke="#62666e"/><path d="M1295 475 L1301 468 L1307 475 M1293 482 L1309 482"/><circle cx="1301" cy="503" r="4"/><line x1="1304" y1="506" x2="1308" y2="510"/><path d="M1294 533 A7 4 0 0 0 1308 533"/><line x1="1289" y1="553" x2="1313" y2="553" stroke="#62666e"/><path d="M1294 565 L1308 565 M1296 571 L1306 571 M1298 577 L1304 583"/><path d="M1307 595 L1310 598"/></g></svg>
<div class="t" style="left:1263px;top:311px;font-size:6.5px;color:#6a6d70;font-weight:bold">TOP</div>
<div class="t" style="left:1265px;top:276px;font-size:11px;color:#d0d0d0;font-weight:bold">N</div>
<div class="t" style="left:1298px;top:309px;font-size:11px;color:#d0d0d0;font-weight:bold">E</div>
<div class="t" style="left:1265px;top:341px;font-size:11px;color:#d0d0d0;font-weight:bold">S</div>
<div class="t" style="left:1230px;top:309px;font-size:11px;color:#d0d0d0;font-weight:bold">W</div>
<div class="t" style="left:1252px;top:368.5px;font-size:10px;color:#6e7176;letter-spacing:-0.3px">WCS</div>
<div class="t" style="left:1280px;top:368.5px;font-size:8px;color:#6e7176;">&#9662;</div>
<div class="a" style="left:782px;top:634px;width:50px;height:24px;background:rgba(31,36,48,0.35);"></div>
<svg width="1536" height="792" style="pointer-events:none"><g fill="#c8c8c8"><rect x="788" y="638" width="3" height="2"/><rect x="788" y="642" width="3" height="2"/><rect x="788" y="646" width="3" height="2"/><rect x="788" y="650" width="3" height="2"/><rect x="788" y="654" width="3" height="2"/></g><path d="M797 642 L805 650 M805 642 L797 650" stroke="#e8e8e8" stroke-width="1.8"/><path d="M816 654 L824 645 M822 643 A3 3 0 1 0 828 647" stroke="#d8d8d8" stroke-width="2" fill="none"/></svg>
<div class="a" style="left:835.5px;top:634.5px;width:251.5px;height:24px;background:#cacaca;border-radius:3px"></div>
<svg width="1536" height="792" style="pointer-events:none"><rect x="840" y="641" width="14" height="10" stroke="#505050" stroke-width="1.5" fill="none"/><path d="M856 645 L862 645 L859 649 Z" fill="#404040"/><path d="M1074 650 L1078 645 L1082 650 Z" fill="#404040"/></svg>
<div class="t" style="left:870px;top:641.5px;font-size:11px;color:#8a8a8a;letter-spacing:0.1px"><i>Type&nbsp; a&nbsp; command</i></div>
<div class="a" style="left:551px;top:660px;width:769px;height:54px;background:#1f2430;"></div>
<svg width="1536" height="792" style="pointer-events:none"><path d="M563 660 L568 676 L614 676 L619 660 Z" fill="#2c3340"/><path d="M620 660 L625 676 L672 676 L677 660 Z" fill="#2a303b"/><path d="M682 661 L685 675 L700 675 L703 661 Z" fill="#2a303b"/><circle cx="693" cy="668" r="3.5" fill="#8a8f96"/></svg>
<div class="t" style="left:575px;top:662px;font-size:11px;color:#f0f0f0;font-weight:bold;letter-spacing:-0.2px">Model</div>
<div class="t" style="left:629px;top:662px;font-size:11px;color:#b8bcc2;letter-spacing:-0.2px">Layout1</div>
<div class="a" style="left:1003px;top:662px;width:44px;height:22.5px;background:#3a414b;"></div>
<div class="a" style="left:1050px;top:662px;width:60px;height:22.5px;background:#3a414b;"></div>
<div class="a" style="left:1112.8px;top:662px;width:20.5px;height:22.5px;background:#3a414b;"></div>
<div class="a" style="left:1135.8px;top:662px;width:22px;height:22.5px;background:#3a414b;"></div>
<div class="a" style="left:1160px;top:662px;width:21.5px;height:22.5px;background:#3a414b;"></div>
<div class="a" style="left:1182px;top:662px;width:21px;height:22.5px;background:#4e8cc8;"></div>
<div class="a" style="left:1205px;top:662px;width:50.5px;height:22.5px;background:#3a414b;"></div>
<div class="a" style="left:1258px;top:662px;width:22px;height:22.5px;background:#4e8cc8;"></div>
<div class="a" style="left:1280px;top:662px;width:22px;height:22.5px;background:#4e8cc8;"></div>
<div class="a" style="left:1304px;top:662px;width:13px;height:22.5px;background:#3a414b;"></div>
<div class="t" style="left:1007px;top:667px;font-size:11px;color:#e0e0e0;letter-spacing:-0.8px">MODEL</div>
<div class="a" style="left:606px;top:688.5px;width:21.5px;height:22.5px;background:#3a414b;"></div>
<div class="a" style="left:629px;top:688.5px;width:22px;height:22.5px;background:#4e8cc8;"></div>
<div class="a" style="left:653px;top:688.5px;width:21px;height:22.5px;background:#3a414b;"></div>
<div class="a" style="left:676px;top:688.5px;width:36.5px;height:22.5px;background:#3a414b;"></div>
<div class="a" style="left:715px;top:688.5px;width:22.5px;height:22.5px;background:#4e8cc8;"></div>
<div class="a" style="left:740px;top:688.5px;width:34px;height:22.5px;background:#3a414b;"></div>
<div class="a" style="left:776px;top:688.5px;width:20.5px;height:22.5px;background:#4e8cc8;"></div>
<div class="a" style="left:798.6px;top:688.5px;width:13.4px;height:22.5px;background:#3a414b;"></div>
<div class="a" style="left:816px;top:688.5px;width:21.6px;height:22.5px;background:#4e8cc8;"></div>
<div class="a" style="left:839.6px;top:688.5px;width:112.4px;height:22.5px;background:#3a414b;"></div>
<div class="a" style="left:955px;top:688.5px;width:37px;height:22.5px;background:#3a414b;"></div>
<div class="a" style="left:994px;top:688.5px;width:21px;height:22.5px;background:#3a414b;"></div>
<div class="a" style="left:1018px;top:688.5px;width:89px;height:22.5px;background:#3a414b;"></div>
<div class="a" style="left:1110.6px;top:688.5px;width:21.4px;height:22.5px;background:#3a414b;"></div>
<div class="a" style="left:1135px;top:688.5px;width:36px;height:22.5px;background:#3a414b;"></div>
<div class="a" style="left:1173.6px;top:688.5px;width:22px;height:22.5px;background:#3a414b;"></div>
<div class="a" style="left:1198.8px;top:688.5px;width:21.2px;height:22.5px;background:#3a414b;"></div>
<div class="a" style="left:1223.5px;top:688.5px;width:45px;height:22.5px;background:#3a414b;"></div>
<div class="a" style="left:1271.8px;top:688.5px;width:45.2px;height:22.5px;background:#3a414b;"></div>
<div class="t" style="left:887px;top:693px;font-size:11px;color:#e0e0e0;letter-spacing:-0.5px">1:1 / 100%</div>
<div class="t" style="left:1045px;top:693px;font-size:11px;color:#dde0f0;letter-spacing:-0.3px">Decimal</div>
<svg width="1536" height="792" style="pointer-events:none"><g stroke="#e8e8e8" stroke-width="1.5" fill="none"><g stroke-width="1.6"><line x1="1057" y1="666" x2="1057" y2="680"/><line x1="1061" y1="666" x2="1061" y2="680"/><line x1="1065" y1="666" x2="1065" y2="680"/><line x1="1054" y1="669" x2="1068" y2="669"/><line x1="1054" y1="673" x2="1068" y2="673"/><line x1="1054" y1="677" x2="1068" y2="677"/></g><g fill="#e0e0e0" stroke="none"><circle cx="1079" cy="668" r="1"/><circle cx="1084" cy="668" r="1"/><circle cx="1089" cy="668" r="1"/><circle cx="1079" cy="673" r="1"/><circle cx="1084" cy="673" r="1"/><circle cx="1089" cy="673" r="1"/><circle cx="1079" cy="678" r="1"/><circle cx="1084" cy="678" r="1"/><circle cx="1089" cy="678" r="1"/></g><path d="M1099 671 L1105 671 L1102 675 Z" fill="#d8d8d8" stroke="none"/><path d="M1205 671 L1211 671 L1208 675 Z" fill="#d8d8d8" stroke="none"/><path d="M1242 671 L1248 671 L1245 675 Z" fill="#d8d8d8" stroke="none"/><path d="M1307 671 L1313 671 L1310 675 Z" fill="#d8d8d8" stroke="none"/><rect x="1123" y="666" width="6" height="6"/><path d="M1123 672 L1118 677"/><rect x="1116" y="676" width="5" height="4" fill="#e8e8e8"/><path d="M1139 670 L1145 670 M1142 667 L1142 673"/><rect x="1148" y="674" width="8" height="5" fill="#e8e8e8"/><path d="M1164 665 L1164 681 L1178 681"/><circle cx="1166" cy="678" r="1.5" fill="#e8e8e8"/><path d="M1186 672 L1193 666 L1199 672 L1193 678 Z" stroke="#f0f8ff"/><line x1="1188" y1="672" x2="1200" y2="672"/><path d="M1227 666 L1236 680 M1236 666 L1227 680" stroke="#c04040"/><line x1="1231" y1="664" x2="1231" y2="682" stroke="#40a040" stroke-width="1"/><path d="M1262 680 L1276 668 M1262 680 L1276 680" stroke="#f0f8ff"/><rect x="1286" y="667" width="12" height="13" stroke="#f0f8ff"/><rect x="1284" y="665" width="4" height="4" fill="#f0f8ff"/><g stroke-width="1.8"><line x1="610" y1="694" x2="623" y2="694"/><line x1="610" y1="698" x2="623" y2="698"/><line x1="610" y1="702" x2="620" y2="702"/><line x1="610" y1="706" x2="623" y2="706"/></g><g fill="#ffffff" stroke="none"><rect x="632" y="691" width="16" height="16" fill="#d8e8f8"/><rect x="632" y="691" width="4" height="4" fill="#3a5a90"/><rect x="632" y="699" width="4" height="4" fill="#3a5a90"/><rect x="636" y="695" width="4" height="4" fill="#3a5a90"/><rect x="636" y="703" width="4" height="4" fill="#3a5a90"/><rect x="640" y="691" width="4" height="4" fill="#3a5a90"/><rect x="640" y="699" width="4" height="4" fill="#3a5a90"/><rect x="644" y="695" width="4" height="4" fill="#3a5a90"/><rect x="644" y="703" width="4" height="4" fill="#3a5a90"/></g><rect x="658" y="694" width="12" height="12" fill="#70d060" stroke="#2a3a2a"/><line x1="656" y1="693" x2="661" y2="691" stroke="#ddd"/><rect x="683" y="692" width="12" height="12" rx="3"/><rect x="687" y="696" width="12" height="12" rx="3"/><rect x="680" y="703" width="4" height="4" stroke="#c09040"/><path d="M704 698 L710 698 L707 702 Z" fill="#d8d8d8" stroke="none"/><path d="M720 692 L720 706 L734 706 M720 692 L730 700" stroke="#ffffff"/><rect x="744" y="692" width="16" height="15" rx="2" stroke-dasharray="3 2"/><path d="M766 698 L772 698 L769 702 Z" fill="#d8d8d8" stroke="none"/><circle cx="786" cy="699" r="7" stroke="#ffffff"/><path d="M781 703 L786 694 L791 703 Z" stroke="#ffffff"/><path d="M802 698 L808 698 L805 702 Z" fill="#d8d8d8" stroke="none"/><path d="M826 692 L826 700 L820 706 M826 700 L832 706 M829 694 L832 694 L832 697" stroke="#ffffff" stroke-width="2"/><path d="M849 692 L849 700 L843 706 M849 700 L855 706 M853 693 L856 696" stroke="#e8e8e8" stroke-width="2"/><path d="M871 692 L871 700 L865 706 M871 700 L877 706" stroke="#e8e8e8" stroke-width="2"/><path d="M940 698 L946 698 L943 702 Z" fill="#d8d8d8" stroke="none"/><circle cx="966" cy="699" r="4" stroke="#e8e8e8" stroke-width="3.5" stroke-dasharray="2.2 1.5"/><circle cx="966" cy="699" r="2" fill="#3a414b" stroke="none"/><path d="M980 698 L986 698 L983 702 Z" fill="#d8d8d8" stroke="none"/><path d="M996 699 L1012 699 M1004 691 L1004 707" stroke-width="2.2"/><rect x="1025" y="691" width="6" height="16" fill="#e0e0e0" stroke="none"/><path d="M1096 698 L1102 698 L1099 702 Z" fill="#d8d8d8" stroke="none"/><rect x="1116" y="691" width="10" height="16"/><line x1="1118" y1="695" x2="1124" y2="695"/><line x1="1118" y1="699" x2="1124" y2="699"/><line x1="1118" y1="703" x2="1124" y2="703"/><rect x="1139" y="692" width="13" height="10"/><rect x="1147" y="700" width="7" height="6" fill="#e8e8e8"/><path d="M1160 698 L1166 698 L1163 702 Z" fill="#d8d8d8" stroke="none"/><rect x="1177" y="692" width="6" height="6"/><circle cx="1190" cy="697" r="3"/><path d="M1181 707 L1185 700 L1189 707 Z"/><circle cx="1209" cy="699" r="7.5" stroke="#a8a8a8" stroke-width="2"/><line x1="1204" y1="704" x2="1214" y2="694" stroke="#a8a8a8"/><circle cx="1233" cy="697" r="5" fill="#3a70c0" stroke="none"/><circle cx="1229" cy="703" r="3" fill="#e0b020" stroke="none"/><path d="M1231 703 L1235 707 L1241 699" stroke="#40b040" stroke-width="2"/><rect x="1249" y="691" width="14" height="12" fill="#b8c0b0" stroke="none"/><path d="M1254 707 L1258 699 L1262 707 Z" fill="#e08040" stroke="none"/><rect x="1277" y="692" width="15" height="13" stroke="#d8d8d8"/><path d="M1281 701 L1286 696" stroke-width="1.2"/><g stroke-width="2.2" stroke="#f4f4f4"><line x1="1298" y1="693" x2="1314" y2="693"/><line x1="1298" y1="699" x2="1314" y2="699"/><line x1="1298" y1="705" x2="1314" y2="705"/></g></g></svg>
<div class="a" style="left:551px;top:712px;width:769px;height:1.5px;background:#1f2430;"></div>
<div class="a" style="left:549px;top:714.5px;width:773px;height:3px;background:#1d4f68;"></div>
</div></body></html>
